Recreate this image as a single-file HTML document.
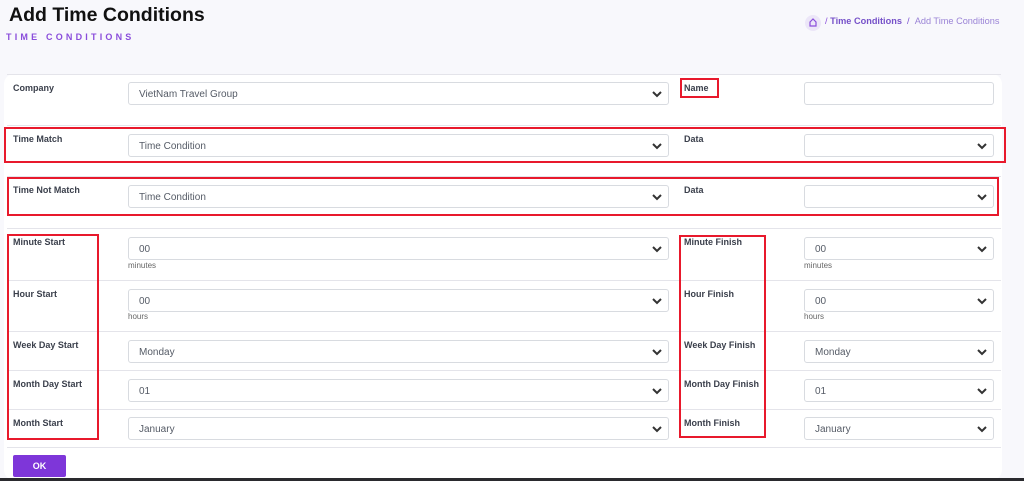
<!DOCTYPE html>
<html><head><meta charset="utf-8"><style>
*{box-sizing:border-box;margin:0;padding:0}
body{width:1024px;height:481px;background:#f8f8fc;font-family:"Liberation Sans",sans-serif;position:relative;overflow:hidden}
.a{position:absolute}
.card{left:4px;top:74px;width:998px;height:406px;background:#fff;border-radius:10px}
.sep{position:absolute;left:7px;width:994px;height:1px;background:#e4e4ea}
.lbl{position:absolute;font-size:9px;font-weight:bold;color:#3a3f4b}
.sel{position:absolute;height:23px;border:1px solid #d8dbe0;border-radius:3px;background:#fff;font-size:10px;color:#555b66;padding:6px 0 0 10px}
.sel svg{position:absolute;right:6px;top:8px}
.hint{position:absolute;font-size:8px;color:#666}
.red{position:absolute;border:2px solid #e8192c}
</style></head><body>
<div class="a" style="left:9px;top:4px;font-size:19.5px;font-weight:bold;color:#111">Add Time Conditions</div>
<div class="a" style="left:6px;top:32px;font-size:9px;letter-spacing:3.2px;color:#8a4ddb;font-weight:bold">TIME CONDITIONS</div>
<div class="a" style="left:805px;top:15px;width:16px;height:16px;border-radius:50%;background:#ece6f8"></div>
<svg class="a" style="left:809px;top:18px" width="8" height="9" viewBox="0 0 8 9"><path d="M1 4L4 1 7 4V8H1Z" fill="none" stroke="#8a4ddb" stroke-width="1.2"/></svg>
<div class="a" style="left:825px;top:16px;font-size:9.2px;color:#7a4fd0"><span style="color:#8a4ddb">/</span> <b style="color:#7651c9">Time Conditions</b> &nbsp;/ &nbsp;<span style="color:#9a83d6">Add Time Conditions</span></div>
<div class="a card"></div>
<div class="sep" style="top:74px"></div>
<div class="sep" style="top:125px"></div>
<div class="sep" style="top:176px"></div>
<div class="sep" style="top:228px"></div>
<div class="sep" style="top:280px"></div>
<div class="sep" style="top:331px"></div>
<div class="sep" style="top:370px"></div>
<div class="sep" style="top:409px"></div>
<div class="sep" style="top:447px"></div>

<div class="lbl" style="left:13px;top:83px">Company</div>
<div class="sel" style="left:128px;top:82px;width:541px">VietNam Travel Group<svg width="10" height="7"><path d="M1 1L5 5 9 1" fill="none" stroke="#333" stroke-width="2"/></svg></div>
<div class="lbl" style="left:684px;top:83px">Name</div>
<div class="sel" style="left:804px;top:82px;width:190px"></div>

<div class="lbl" style="left:13px;top:134px">Time Match</div>
<div class="sel" style="left:128px;top:134px;width:541px">Time Condition<svg width="10" height="7"><path d="M1 1L5 5 9 1" fill="none" stroke="#333" stroke-width="2"/></svg></div>
<div class="lbl" style="left:684px;top:134px">Data</div>
<div class="sel" style="left:804px;top:134px;width:190px"><svg width="10" height="7"><path d="M1 1L5 5 9 1" fill="none" stroke="#333" stroke-width="2"/></svg></div>

<div class="lbl" style="left:13px;top:185px">Time Not Match</div>
<div class="sel" style="left:128px;top:185px;width:541px">Time Condition<svg width="10" height="7"><path d="M1 1L5 5 9 1" fill="none" stroke="#333" stroke-width="2"/></svg></div>
<div class="lbl" style="left:684px;top:185px">Data</div>
<div class="sel" style="left:804px;top:185px;width:190px"><svg width="10" height="7"><path d="M1 1L5 5 9 1" fill="none" stroke="#333" stroke-width="2"/></svg></div>

<div class="lbl" style="left:13px;top:237px">Minute Start</div>
<div class="sel" style="left:128px;top:237px;width:541px">00<svg width="10" height="7"><path d="M1 1L5 5 9 1" fill="none" stroke="#333" stroke-width="2"/></svg></div>
<div class="hint" style="left:128px;top:261px">minutes</div>
<div class="lbl" style="left:684px;top:237px">Minute Finish</div>
<div class="sel" style="left:804px;top:237px;width:190px">00<svg width="10" height="7"><path d="M1 1L5 5 9 1" fill="none" stroke="#333" stroke-width="2"/></svg></div>
<div class="hint" style="left:804px;top:261px">minutes</div>

<div class="lbl" style="left:13px;top:289px">Hour Start</div>
<div class="sel" style="left:128px;top:289px;width:541px">00<svg width="10" height="7"><path d="M1 1L5 5 9 1" fill="none" stroke="#333" stroke-width="2"/></svg></div>
<div class="hint" style="left:128px;top:312px">hours</div>
<div class="lbl" style="left:684px;top:289px">Hour Finish</div>
<div class="sel" style="left:804px;top:289px;width:190px">00<svg width="10" height="7"><path d="M1 1L5 5 9 1" fill="none" stroke="#333" stroke-width="2"/></svg></div>
<div class="hint" style="left:804px;top:312px">hours</div>

<div class="lbl" style="left:13px;top:340px">Week Day Start</div>
<div class="sel" style="left:128px;top:340px;width:541px">Monday<svg width="10" height="7"><path d="M1 1L5 5 9 1" fill="none" stroke="#333" stroke-width="2"/></svg></div>
<div class="lbl" style="left:684px;top:340px">Week Day Finish</div>
<div class="sel" style="left:804px;top:340px;width:190px">Monday<svg width="10" height="7"><path d="M1 1L5 5 9 1" fill="none" stroke="#333" stroke-width="2"/></svg></div>

<div class="lbl" style="left:13px;top:379px">Month Day Start</div>
<div class="sel" style="left:128px;top:379px;width:541px">01<svg width="10" height="7"><path d="M1 1L5 5 9 1" fill="none" stroke="#333" stroke-width="2"/></svg></div>
<div class="lbl" style="left:684px;top:379px">Month Day Finish</div>
<div class="sel" style="left:804px;top:379px;width:190px">01<svg width="10" height="7"><path d="M1 1L5 5 9 1" fill="none" stroke="#333" stroke-width="2"/></svg></div>

<div class="lbl" style="left:13px;top:418px">Month Start</div>
<div class="sel" style="left:128px;top:417px;width:541px">January<svg width="10" height="7"><path d="M1 1L5 5 9 1" fill="none" stroke="#333" stroke-width="2"/></svg></div>
<div class="lbl" style="left:684px;top:418px">Month Finish</div>
<div class="sel" style="left:804px;top:417px;width:190px">January<svg width="10" height="7"><path d="M1 1L5 5 9 1" fill="none" stroke="#333" stroke-width="2"/></svg></div>

<div class="a" style="left:13px;top:455px;width:53px;height:22px;background:#7e36d9;border-radius:2px;color:#fff;font-size:9px;font-weight:bold;text-align:center;line-height:22px">OK</div>

<div class="red" style="left:680px;top:78px;width:39px;height:20px"></div>
<div class="red" style="left:4px;top:127px;width:1002px;height:36px"></div>
<div class="red" style="left:7px;top:177px;width:992px;height:39px"></div>
<div class="red" style="left:7px;top:234px;width:92px;height:206px"></div>
<div class="red" style="left:679px;top:235px;width:87px;height:203px"></div>
<div class="a" style="left:0;top:478px;width:1024px;height:3px;background:#2a2a2e"></div>
</body></html>
